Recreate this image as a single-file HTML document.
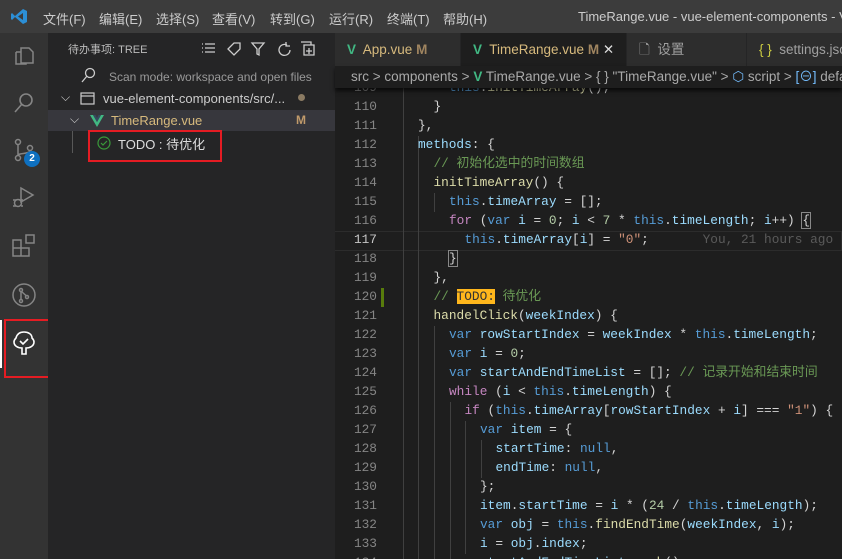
<!DOCTYPE html>
<html><head><meta charset="utf-8"><style>
*{margin:0;padding:0;box-sizing:border-box}
body{width:842px;height:559px;overflow:hidden;background:#1e1e1e;font-family:"Liberation Sans","Noto Sans CJK SC",sans-serif;position:relative}
.abs{position:absolute}
#title{left:0;top:0;width:842px;height:33px;background:#3c3c3c;color:#ccc;font-size:13px;overflow:hidden}
#title span{position:absolute;top:9px;white-space:nowrap}
#act{left:0;top:33px;width:48px;height:526px;background:#333}
#side{left:48px;top:33px;width:287px;height:526px;background:#252526;color:#ccc;font-size:13px}
#tabs{left:335px;top:33px;width:507px;height:33px;background:#252526;overflow:hidden}
.tab{position:absolute;top:0;height:33px;background:#2d2d2d;color:#a0a0a0;font-size:13.5px;line-height:33px;padding-left:12px;white-space:nowrap;overflow:hidden}
#bc{left:335px;top:66px;width:507px;height:22px;background:#1e1e1e;color:#a9a9a9;font-size:13.5px;line-height:22px;white-space:nowrap;overflow:hidden;padding-left:16px;box-shadow:0 3px 4px #000a;z-index:3}
#code{left:335px;top:88px;width:507px;height:471px;overflow:hidden;font-family:"Liberation Mono","Noto Sans CJK SC",monospace;font-size:12.8px}
.ln{position:absolute;left:0;width:42px;text-align:right;color:#858585;line-height:19px}
.c{position:absolute;white-space:pre;color:#d4d4d4;line-height:19px;height:19px}
.k{color:#569cd6}.p{color:#c586c0}.v{color:#9cdcfe}.f{color:#dcdcaa}.s{color:#ce9178}.n{color:#b5cea8}.cm{color:#6a9955}
.g{position:absolute;width:1px;background:#404040}
</style></head><body>
<div id="title" class="abs">
<svg class="abs" style="left:11px;top:8px" width="17" height="17" viewBox="0 0 17 17"><path d="M12 1 L16 3 V14 L12 16 L4 9 L1 12 L0 11 V6 L1 5 L4 8 L12 1Z M12 5 L7 8.5 L12 12Z" fill="#2c8fd6"/></svg>
<span style="left:43px">文件(F)</span><span style="left:99px">编辑(E)</span><span style="left:156px">选择(S)</span><span style="left:212px">查看(V)</span><span style="left:270px">转到(G)</span><span style="left:329px">运行(R)</span><span style="left:387px">终端(T)</span><span style="left:443px">帮助(H)</span>
<span style="left:578px">TimeRange.vue - vue-element-components - Visual</span>
</div>
<div id="act" class="abs">
<svg class="abs" style="left:12px;top:10px" width="24" height="24" viewBox="0 0 24 24" fill="none" stroke="#858585" stroke-width="1.5"><path d="M9 5h8l4 4v11H9z M4 9h5 M4 9v12h10v-1"/></svg>
<svg class="abs" style="left:12px;top:58px" width="24" height="24" viewBox="0 0 24 24" fill="none" stroke="#858585" stroke-width="1.6"><circle cx="14" cy="9" r="6"/><path d="M10 13 3 21"/></svg>
<svg class="abs" style="left:12px;top:105px" width="24" height="24" viewBox="0 0 24 24" fill="none" stroke="#858585" stroke-width="1.5"><circle cx="6" cy="4" r="2.5"/><circle cx="6" cy="20" r="2.5"/><circle cx="18" cy="10" r="2.5"/><path d="M6 6.5v11 M18 12.5c0 4-12 2-12 5"/></svg>
<div class="abs" style="left:24px;top:118px;width:16px;height:16px;border-radius:8px;background:#0e70c0;color:#fff;font-size:10px;font-weight:bold;text-align:center;line-height:16px">2</div>
<svg class="abs" style="left:12px;top:153px" width="24" height="24" viewBox="0 0 24 24" fill="none" stroke="#858585" stroke-width="1.5"><path d="M9 2v14l12-7z"/><circle cx="6" cy="17" r="3.5"/><path d="M1 14h3 M1 20h3 M9 14h2 M9 20h2"/></svg>
<svg class="abs" style="left:12px;top:200px" width="24" height="24" viewBox="0 0 24 24" fill="none" stroke="#858585" stroke-width="1.5"><path d="M1 7h8v8h8v8H1z M1 15h8v8 M14 2h8v8h-8z"/></svg>
<svg class="abs" style="left:11px;top:249px" width="26" height="26" viewBox="0 0 26 26" fill="none" stroke="#858585" stroke-width="1.5"><circle cx="13" cy="13" r="11"/><circle cx="10" cy="8" r="1.5"/><circle cx="10" cy="19" r="1.5"/><circle cx="16" cy="15" r="1.5"/><path d="M10 9.5v8 M10.5 9.5l5 4.5"/></svg>
<div class="abs" style="left:0;top:287px;width:2px;height:48px;background:#fff"></div>
<svg class="abs" style="left:11px;top:297px" width="26" height="26" viewBox="0 0 26 26" fill="none" stroke="#fff" stroke-width="1.6"><path d="M11 24h4v-6c4 0 8-2 8-6 0-2-1-3-2-4 0-4-4-6-8-6S6 4 5 8c-1 1-2 2-2 4 0 4 4 6 8 6z"/><path d="M9 11l3 3 5-5"/></svg>
<div class="abs" style="left:4px;top:286px;width:47px;height:59px;border:2px solid #e51c23"></div>
</div>
<div id="side" class="abs">
<div class="abs" style="left:20px;top:8px;font-size:11px;color:#bbb">待办事项: TREE</div>
<svg class="abs" style="left:152px;top:8px" width="118" height="16" viewBox="0 0 118 16" fill="none" stroke="#ccc" stroke-width="1.3"><path d="M2 3h1M2 7h1M2 11h1M5 3h10M5 7h10M5 11h10"/><path d="M28 8l6-6h6v6l-6 6z"/><path d="M52 2h12l-5 6v6l-2-1V8z"/><path d="M87 4a5.5 5.5 0 1 0 3 5 M86 1v4h4"/><path d="M104 4h10v10h-10z M101 1h10v3 M109 7v6 M106 10h6"/></svg>
<svg class="abs" style="left:32px;top:34px" width="16" height="16" viewBox="0 0 16 16" fill="none" stroke="#ccc" stroke-width="1.3"><circle cx="10" cy="6" r="4.5"/><path d="M7 9 2 15"/></svg>
<div class="abs" style="left:61px;top:37px;font-size:12px;color:#999">Scan mode: workspace and open files</div>
<div class="abs" style="left:13px;top:57px;color:#ccc;font-size:12px">⌵</div>
<svg class="abs" style="left:32px;top:59px" width="15" height="13" viewBox="0 0 15 13" fill="none" stroke="#ccc" stroke-width="1.2"><rect x="1" y="1" width="13" height="11"/><path d="M1 4h13"/></svg>
<div class="abs" style="left:55px;top:58px;color:#ccc">vue-element-components/src/...</div>
<div class="abs" style="left:250px;top:61px;width:7px;height:7px;border-radius:4px;background:#8b7b63"></div>
<div class="abs" style="left:0;top:77px;width:287px;height:21px;background:#37373d"></div>
<div class="abs" style="left:22px;top:79px;color:#ccc;font-size:12px">⌵</div>
<svg class="abs" style="left:42px;top:82px" width="14" height="12" viewBox="0 0 14 12"><path d="M0 0h3l4 7 4-7h3L7 12z" fill="#41b883"/><path d="M3 0h2.5L7 3l1.5-3H11L7 7z" fill="#35495e"/></svg>
<div class="abs" style="left:63px;top:80px;color:#d7ba7d">TimeRange.vue</div>
<div class="abs" style="left:248px;top:80px;color:#c09a6b;font-weight:bold;font-size:12px">M</div>
<div class="abs" style="left:24px;top:98px;width:1px;height:22px;background:#585858"></div>
<svg class="abs" style="left:49px;top:103px" width="14" height="14" viewBox="0 0 14 14" fill="none" stroke="#3a9a3a" stroke-width="1.2"><circle cx="7" cy="7" r="6"/><path d="M4 7l2 2 4-4"/></svg>
<div class="abs" style="left:70px;top:101px;color:#ddd">TODO : 待优化</div>
<div class="abs" style="left:40px;top:97px;width:134px;height:32px;border:2px solid #e51c23"></div>
</div>
<div id="tabs" class="abs">
<div class="tab" style="left:0;width:125px"><span style="color:#41b883;font-weight:bold">V</span>&nbsp; <span style="color:#d7ba7d">App.vue</span> <b style="color:#a08560">M</b></div>
<div class="tab" style="left:126px;width:165px;background:#1e1e1e;color:#d7ba7d"><span style="color:#41b883;font-weight:bold">V</span>&nbsp; TimeRange.vue <b style="color:#a08560">M</b> <span style="color:#ddd">✕</span></div>
<div class="tab" style="left:292px;width:119px">🗋&nbsp; 设置</div>
<div class="tab" style="left:412px;width:100px"><span style="color:#cbcb41">{ }</span>&nbsp; settings.json</div>
</div>
<div id="bc" class="abs">src &gt; components &gt; <span style="color:#41b883;font-weight:bold">V</span> TimeRange.vue &gt; { } "TimeRange.vue" &gt; <span style="color:#75beff">⬡</span> script &gt; <span style="color:#75beff">[⊖]</span> default</div>
<div id="code" class="abs">
<div class="abs" style="left:0;top:143px;width:507px;height:20px;border:1px solid #2c2c2c;border-left:none"></div>
<div class="abs" style="left:46px;top:200px;width:3px;height:19px;background:#587c0c"></div>
<div class="g" style="left:68px;top:0;height:471px"></div>
<div class="g" style="left:83px;top:48px;height:423px"></div>
<div class="g" style="left:99px;top:105px;height:19px"></div>
<div class="g" style="left:99px;top:238px;height:233px"></div>
<div class="g" style="left:115px;top:314px;height:157px"></div>
<div class="g" style="left:130px;top:333px;height:133px"></div>
<div class="g" style="left:146px;top:352px;height:38px"></div>
<div id="lines"></div>
</div>
<script>
var L=[
[109,3,'<span class="k">this</span>.<span class="f">initTimeArray</span>();'],
[110,2,'}'],[111,1,'},'],[112,1,'<span class="v">methods</span>: {'],
[113,2,'<span class="cm">// 初始化选中的时间数组</span>'],
[114,2,'<span class="f">initTimeArray</span>() {'],
[115,3,'<span class="k">this</span>.<span class="v">timeArray</span> = [];'],
[116,3,'<span class="p">for</span> (<span class="k">var</span> <span class="v">i</span> = <span class="n">0</span>; <span class="v">i</span> &lt; <span class="n">7</span> * <span class="k">this</span>.<span class="v">timeLength</span>; <span class="v">i</span>++) <span style="outline:1px solid #888">{</span>'],
[117,4,'<span class="k">this</span>.<span class="v">timeArray</span>[<span class="v">i</span>] = <span class="s">"0"</span>;       <span style="color:#5a5a5a">You, 21 hours ago •</span>'],
[118,3,'<span style="outline:1px solid #888">}</span>'],[119,2,'},'],
[120,2,'<span class="cm">// </span><span style="background:#ffb71c;color:#333">TODO:</span><span class="cm"> 待优化</span>'],
[121,2,'<span class="f">handelClick</span>(<span class="v">weekIndex</span>) {'],
[122,3,'<span class="k">var</span> <span class="v">rowStartIndex</span> = <span class="v">weekIndex</span> * <span class="k">this</span>.<span class="v">timeLength</span>;'],
[123,3,'<span class="k">var</span> <span class="v">i</span> = <span class="n">0</span>;'],
[124,3,'<span class="k">var</span> <span class="v">startAndEndTimeList</span> = []; <span class="cm">// 记录开始和结束时间</span>'],
[125,3,'<span class="p">while</span> (<span class="v">i</span> &lt; <span class="k">this</span>.<span class="v">timeLength</span>) {'],
[126,4,'<span class="p">if</span> (<span class="k">this</span>.<span class="v">timeArray</span>[<span class="v">rowStartIndex</span> + <span class="v">i</span>] === <span class="s">"1"</span>) {'],
[127,5,'<span class="k">var</span> <span class="v">item</span> = {'],
[128,6,'<span class="v">startTime</span>: <span class="k">null</span>,'],
[129,6,'<span class="v">endTime</span>: <span class="k">null</span>,'],
[130,5,'};'],
[131,5,'<span class="v">item</span>.<span class="v">startTime</span> = <span class="v">i</span> * (<span class="n">24</span> / <span class="k">this</span>.<span class="v">timeLength</span>);'],
[132,5,'<span class="k">var</span> <span class="v">obj</span> = <span class="k">this</span>.<span class="f">findEndTime</span>(<span class="v">weekIndex</span>, <span class="v">i</span>);'],
[133,5,'<span class="v">i</span> = <span class="v">obj</span>.<span class="v">index</span>;'],
[134,5,'<span class="v">startAndEndTimeList</span>.<span class="f">push</span>();']];
var h='';L.forEach(function(r){var t=(r[0]-110)*19+9;
h+='<div class="ln" style="top:'+t+'px;'+(r[0]==117?'color:#c6c6c6':'')+'">'+r[0]+'</div><div class="c" style="top:'+t+'px;left:'+(83+(r[1]-1)*15.5)+'px">'+r[2]+'</div>';});
document.getElementById('lines').innerHTML=h;
</script>
</body></html>
